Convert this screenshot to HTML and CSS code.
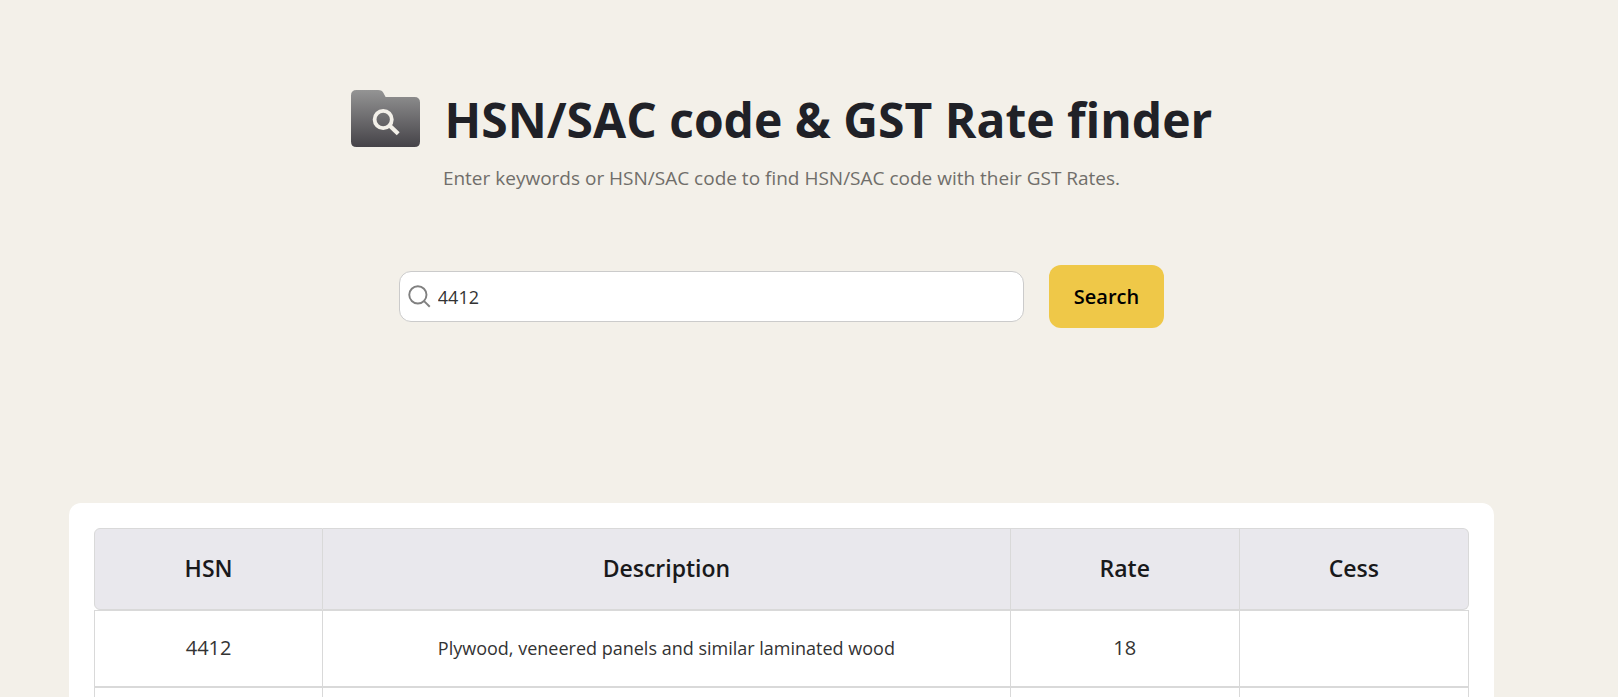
FILE: index.html
```html
<!DOCTYPE html>
<html lang="en">
<head>
    <meta charset="UTF-8">
    <meta name="viewport" content="width=device-width, initial-scale=1.0">
    <title>HSN/SAC code &amp; GST Rate finder</title>
    <link rel="stylesheet" href="styles.css">
</head>
<body>
    <main class="page">
        <!-- Title -->
        <header class="hero">
            <div class="hero-title">
                <svg class="folder-icon" viewBox="0 0 69 57" aria-hidden="true">
                    <defs>
                        <linearGradient id="folderFill" x1="0" y1="0" x2="0" y2="1">
                            <stop offset="0" stop-color="#949494"/>
                            <stop offset="1" stop-color="#454348"/>
                        </linearGradient>
                    </defs>
                    <path fill="url(#folderFill)" d="M5.500 0H27C30 0 31.500 1.200 32.600 3.200L34.600 7H63.500Q69 7 69 12.500V51.500Q69 57 63.500 57H5.500Q0 57 0 51.500V5.500Q0 0 5.500 0Z"/>
                    <circle cx="32.200" cy="29.500" r="8.600" fill="none" stroke="#f3f0e9" stroke-width="3.800"/>
                    <path d="M38 35L47.200 43.800" fill="none" stroke="#f3f0e9" stroke-width="4.200"/>
                </svg>
                <h1>HSN/SAC code &amp; GST Rate finder</h1>
            </div>
            <p class="hero-text">Enter keywords or HSN/SAC code to find HSN/SAC code with their GST Rates.</p>
        </header>

        <!-- Search -->
        <form class="search">
            <label class="search-box" for="keyword">
                <svg class="search-icon" viewBox="0 0 24 24" role="img" aria-label="Keyword or code">
                    <circle cx="10.300" cy="10.300" r="9" fill="none" stroke="#808080" stroke-width="2"/>
                    <path d="M16.500 16.500L22.700 22.700" fill="none" stroke="#808080" stroke-width="2"/>
                </svg>
                <input type="text" id="keyword" value="4412">
            </label>
            <button type="button">Search</button>
        </form>

        <!-- Results -->
        <section class="results">
            <table>
                <thead>
                    <tr>
                        <th scope="col">HSN</th>
                        <th class="col-description" scope="col">Description</th>
                        <th scope="col">Rate</th>
                        <th scope="col">Cess</th>
                    </tr>
                </thead>
                <tbody>
                    <tr>
                        <td>4412</td>
                        <td class="description">Plywood, veneered panels and similar laminated wood</td>
                        <td>18</td>
                        <td></td>
                    </tr>
                    <tr>
                        <td></td>
                        <td></td>
                        <td></td>
                        <td></td>
                    </tr>
                </tbody>
            </table>
        </section>
    </main>
</body>
</html>
```
FILE: styles.css
```css
/* Reset */
* {
    margin: 0;
    padding: 0;
    box-sizing: border-box;
}

body {
    background-color: #f3f0e9;
    color: #333;
    font-family: "Open Sans", "Noto Sans", sans-serif;
}

.page {
    margin-right: 55px;
    padding: 90px 69px 0;
}

/* Title */
.hero {
    text-align: center;
}

.hero-title {
    display: flex;
    justify-content: center;
    align-items: flex-start;
    gap: 25px;
}

.folder-icon {
    flex: none;
    width: 69px;
    height: 57px;
}

h1 {
    color: #202127;
    font-size: 48px;
    font-weight: 700;
    line-height: 60px;
}

.hero-text {
    margin-top: 14px;
    color: #706e6a;
    font-size: 19px;
    line-height: 28px;
}

/* Search */
.search {
    display: flex;
    justify-content: center;
    align-items: center;
    gap: 25px;
    margin-top: 73px;
}

.search-box {
    display: flex;
    align-items: center;
    gap: 7px;
    width: 100%;
    max-width: 625px;
    height: 51px;
    padding: 0 8px;
    background-color: #fff;
    border: 1px solid #cbcbcb;
    border-radius: 12px;
}

.search-icon {
    flex: none;
    width: 23px;
    height: 23px;
}

.search-box input {
    flex: 1;
    min-width: 0;
    border: none;
    outline: none;
    background: none;
    color: #333;
    font: inherit;
    font-size: 18px;
}

button {
    padding: 18px 25px;
    background-color: #efc848;
    color: #000;
    border: none;
    border-radius: 12px;
    font: inherit;
    font-size: 20px;
    font-weight: 600;
    line-height: 27px;
    cursor: pointer;
}

/* Results */
.results {
    margin-top: 175px;
    padding: 25px;
    background-color: #fff;
    border-radius: 12px;
}

table {
    width: 100%;
    table-layout: fixed;
    border-collapse: separate;
    border-spacing: 0;
    text-align: center;
}

th,
td {
    border-right: 1px solid #d9d9d9;
    border-bottom: 1px solid #d9d9d9;
    border-top: 1px solid #d9d9d9;
}

th {
    height: 82px;
    padding-bottom: 3px;
    background-color: #e9e8ed;
    color: #19191b;
    font-size: 23px;
    font-weight: 600;
}

td {
    height: 77px;
    padding-bottom: 2px;
    font-size: 20px;
}

th:first-child,
td:first-child {
    border-left: 1px solid #d9d9d9;
}

th:first-child {
    border-radius: 6px 0 0 6px;
}

th:last-child {
    border-radius: 0 6px 6px 0;
}

.col-description {
    width: 50%;
}

.description {
    font-size: 18px;
}
```
